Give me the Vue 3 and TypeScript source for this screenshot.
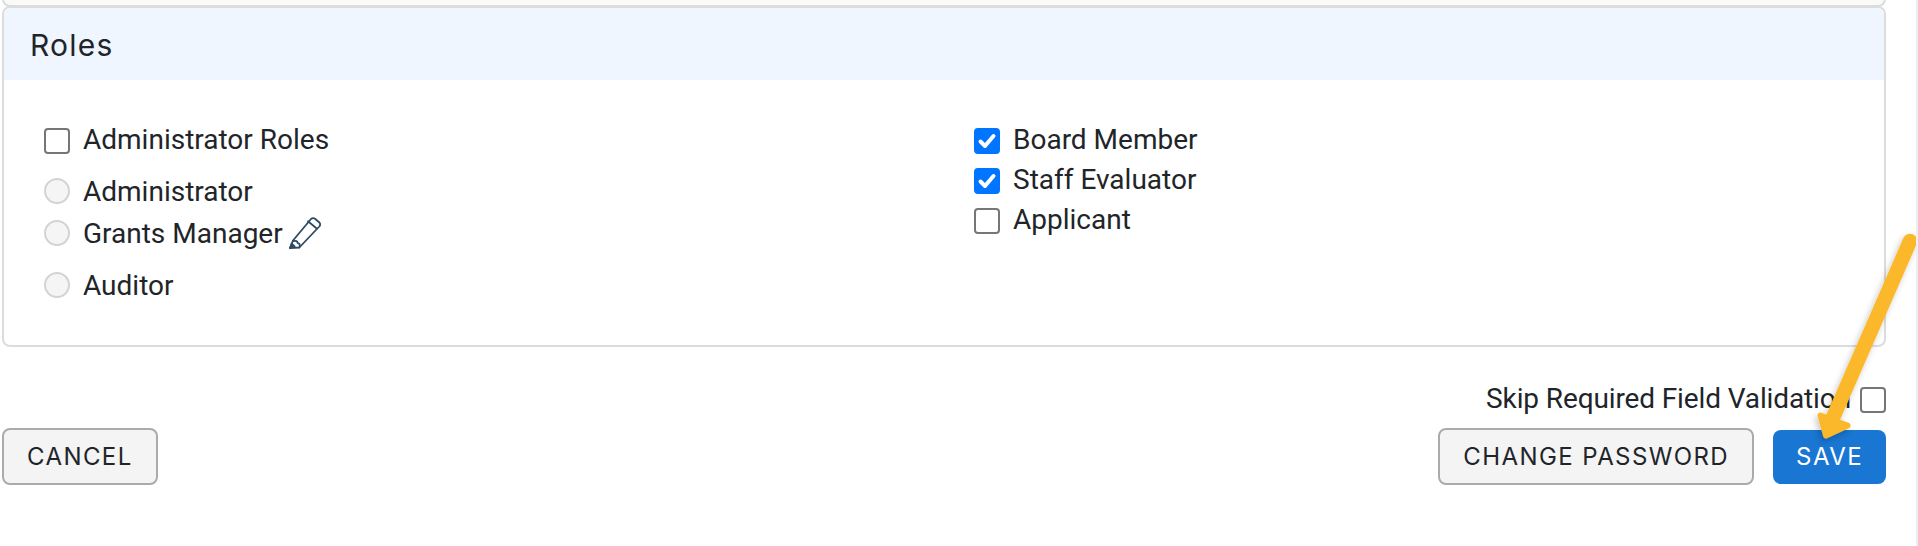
<script setup lang="ts">
interface Role { label: string; checked: boolean }
const rightRoles: Role[] = [
  { label: 'Board Member', checked: true },
  { label: 'Staff Evaluator', checked: true },
  { label: 'Applicant', checked: false },
]
</script>

<template>
  <div class="page">
    <div class="prev-card"></div>
    <section class="card">
      <header class="card-head">Roles</header>
      <div class="card-body">
        <div class="col-left">
          <label class="row row-master"><span class="box"></span>Administrator Roles</label>
          <label class="row row-a"><span class="radio"></span>Administrator</label>
          <label class="row row-g"><span class="radio"></span>Grants Manager
            <svg class="pencil" viewBox="0 0 32 32" fill="none" stroke="#2f4a63" stroke-width="1.8" stroke-linejoin="round" stroke-linecap="round">
              <path d="M4 24 22 2.5Q24 .8 26 2.2L30.4 6Q32 8 30.3 10L10.3 31 1 31.5Z" />
              <path d="M19 4.8 27.7 12" />
              <path d="M4 24.5Q8.6 23.6 8.6 26.6 11.8 27 10.3 31" />
              <path d="M1 31.5 2.6 27 5.6 30Z" fill="#2f4a63" />
            </svg>
          </label>
          <label class="row row-u"><span class="radio"></span>Auditor</label>
        </div>
        <div class="col-right">
          <label v-for="r in rightRoles" :key="r.label" class="row row-right">
            <span class="box" :class="{ on: r.checked }">
              <svg v-if="r.checked" viewBox="0 0 26 26" fill="none" stroke="#fff" stroke-width="4" stroke-linecap="round" stroke-linejoin="round">
                <path d="M6.5 13.5 11 18l8.5-10" />
              </svg>
            </span>{{ r.label }}
          </label>
        </div>
      </div>
    </section>
    <div class="skip"><label class="skip-label">Skip Required Field Validation<span class="box"></span></label></div>
    <footer class="actions">
      <button class="btn">CANCEL</button>
      <div class="actions-right">
        <button class="btn">CHANGE PASSWORD</button>
        <button class="btn primary">SAVE</button>
      </div>
    </footer>
    <svg class="arrow" viewBox="0 0 1918 546" fill="#fbb829" stroke="#fbb829" stroke-linecap="round" stroke-linejoin="round">
      <defs>
        <filter id="arrow-shadow" x="-30%" y="-10%" width="160%" height="120%">
          <feDropShadow dx="-2" dy="3" stdDeviation="3" flood-color="#000" flood-opacity="0.22" />
        </filter>
      </defs>
      <g filter="url(#arrow-shadow)">
        <path d="M1910 241 1832 420" stroke-width="14.5" fill="none" />
        <path d="M1820.5 415.5 1826 435.5 1847.5 425.5Z" stroke-width="6" />
      </g>
    </svg>
  </div>
</template>

<style scoped>
.page {
  position: relative;
  width: 1918px;
  height: 546px;
  box-sizing: border-box;
  padding: 0 30px 0 2px;
  overflow: hidden;
  background: #fff;
  border-right: 2px solid #eeedf4;
  font-family: Roboto, "Liberation Sans", sans-serif;
  color: #212529;
}
.prev-card {
  margin-top: -14px;
  margin-bottom: -1px;
  height: 0;
  padding-top: 19px;
  box-sizing: content-box;
  background: #fafafa;
  border: 2px solid #dcdcdc;
  border-top: 0;
  border-radius: 0 0 8px 8px;
}
.card {
  border: 2px solid #dcdcdc;
  border-radius: 8px;
  height: 341px;
  box-sizing: border-box;
  overflow: hidden;
}
.card-head {
  height: 72px;
  box-sizing: border-box;
  padding: 17px 26px 0;
  background: #eff6ff;
  font-family: Inter, sans-serif;
  font-size: 30px;
  letter-spacing: 1.2px;
  line-height: 40px;
  color: #212529;
}
.card-body {
  display: grid;
  grid-template-columns: 930px 1fr;
  padding: 44px 0 0 40px;
}
.row {
  display: flex;
  align-items: center;
  font-size: 28px;
  line-height: 32px;
  height: 32px;
}
.row-a { margin-top: 20px; }
.row-g { margin-top: 10px; }
.row-u { margin-top: 20px; }
.row-right { margin-bottom: 8px; }
.box, .radio {
  flex: none;
  width: 26px;
  height: 26px;
  margin-right: 13px;
  box-sizing: border-box;
}
.box {
  margin-top: 2px;
  border: 2px solid #767676;
  border-radius: 4px;
  background: #fff;
}
.box.on {
  background: #0075ff;
  border-color: #0075ff;
}
.box svg {
  display: block;
  width: 26px;
  height: 26px;
  margin: -2px;
}
.radio {
  margin-top: -2px;
  border: 2px solid #d3d3d3;
  border-radius: 50%;
  background: #f5f5f5;
}
.pencil {
  width: 32px;
  height: 33px;
  margin-left: 6px;
  margin-top: -4px;
}
.skip {
  margin-top: 36px;
  display: flex;
  justify-content: flex-end;
}
.skip-label {
  display: flex;
  align-items: center;
  font-size: 28px;
  letter-spacing: -0.12px;
  line-height: 32px;
}
.skip-label .box { margin: 2px 0 0 9px; }
.actions {
  display: flex;
  justify-content: space-between;
  align-items: center;
  margin-top: 13px;
}
.actions-right {
  display: flex;
  align-items: center;
  gap: 19px;
}
.btn {
  height: 57px;
  padding: 0 23px;
  border: 2px solid #ababab;
  border-radius: 8px;
  background: #f4f4f4;
  font-family: Inter, sans-serif;
  font-size: 24px;
  letter-spacing: 1.4px;
  color: #212529;
}
.btn.primary {
  height: 54px;
  border: 0;
  background: #1976d2;
  color: #fff;
  padding: 0 23px;
}
.arrow {
  position: absolute;
  left: 0;
  top: 0;
  width: 1918px;
  height: 546px;
  pointer-events: none;
}
</style>
